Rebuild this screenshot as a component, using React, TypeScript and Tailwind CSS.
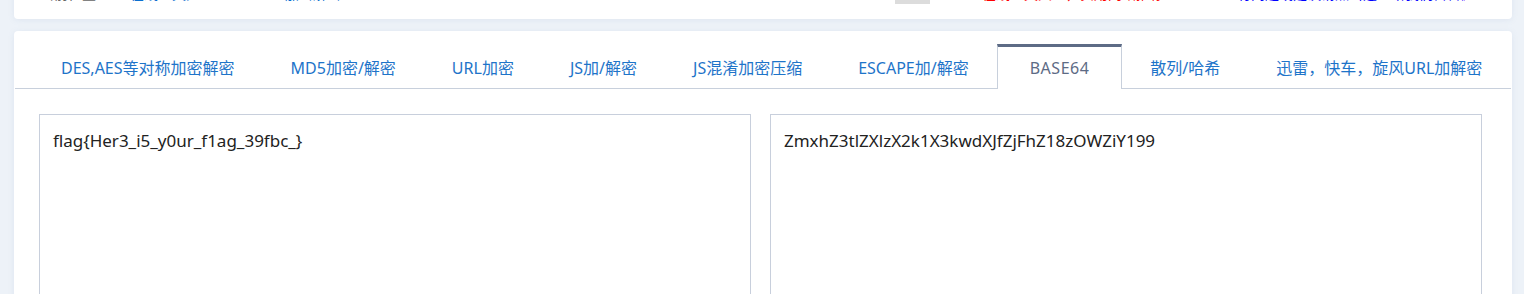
const tabs = [
  'DES,AES等对称加密解密',
  'MD5加密/解密',
  'URL加密',
  'JS加/解密',
  'JS混淆加密压缩',
  'ESCAPE加/解密',
  'BASE64',
  '散列/哈希',
  '迅雷，快车，旋风URL加解密',
];

const ACTIVE = 'BASE64';

export default function App() {
  return (
    <div
      className="min-h-screen bg-[#edf2f8] px-[14px] pr-[12px] overflow-hidden"
      style={{ fontFamily: '"Noto Sans", "Noto Sans CJK SC", sans-serif' }}
    >
      {/* top bar, mostly scrolled out of view */}
      <div className="-mt-[30px] h-[49px] bg-white rounded-b-[4px] shadow-[0_1px_6px_rgba(120,150,190,0.12)] flex items-end pb-[15px] text-[14px] leading-[20px] whitespace-nowrap">
        <span className="ml-[26px] w-[63px] overflow-hidden text-[#666]">当前位置：首页</span>
        <span className="ml-[27px] w-[65px] overflow-hidden text-[#0b6fcf]">在线工具大全</span>
        <span className="ml-[90px] w-[63px] overflow-hidden text-[#0b6fcf]">加密解密工具</span>
        <span className="ml-[547px] w-[35px] h-[19px] bg-[#dcdcdc]" />
        <span className="ml-[52px] w-[178px] overflow-hidden text-[#ff0000]">在线工具大全，实用网站推荐</span>
        <span className="ml-[77px] w-[228px] overflow-hidden text-[#0000ff]">有问题或建议请点击这里给我们留言反馈</span>
      </div>

      {/* main card */}
      <div className="mt-[12px] bg-white rounded-t-[4px] shadow-[0_1px_6px_rgba(120,150,190,0.12)] pb-[40px]">
        <div className="pt-[13px] px-[1px]">
          <div className="flex border-b border-[#c8d0dc] pl-[18px] text-[16px] whitespace-nowrap">
            {tabs.map(t =>
              t === ACTIVE ? (
                <div
                  key={t}
                  className="-mb-px h-[45px] px-[32px] flex items-center border-t-[3px] border-t-[#5d6b85] border-x border-x-[#c8d0dc] bg-white text-[#5d6b85] tracking-[0.5px]"
                >
                  {t}
                </div>
              ) : (
                <div key={t} className="h-[44px] pt-[3px] px-[28px] flex items-center text-[#1e74c9] cursor-pointer">
                  {t}
                </div>
              )
            )}
          </div>
        </div>

        <div className="grid grid-cols-2 gap-[19px] pl-[25px] pr-[30px] pt-[25px]">
          <textarea
            readOnly
            className="h-[220px] resize-none border border-[#c8cfdc] px-[13px] py-[14px] text-[17px] leading-[24px] text-[#222] outline-none"
            defaultValue="flag{Her3_i5_y0ur_f1ag_39fbc_}"
          />
          <textarea
            readOnly
            className="h-[220px] resize-none border border-[#c8cfdc] px-[13px] py-[14px] text-[17px] leading-[24px] text-[#222] outline-none"
            defaultValue="ZmxhZ3tlZXlzX2k1X3kwdXJfZjFhZ18zOWZiY199"
          />
        </div>
      </div>
    </div>
  );
}
